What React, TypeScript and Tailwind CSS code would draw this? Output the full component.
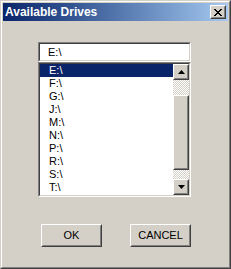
import React from 'react'

const drives = ['E:\\', 'F:\\', 'G:\\', 'J:\\', 'M:\\', 'N:\\', 'P:\\', 'R:\\', 'S:\\', 'T:\\']

function Arrow({ down }: { down?: boolean }) {
  return (
    <svg width="7" height="4" viewBox="0 0 7 4" className="block">
      {down ? <polygon points="0,0 7,0 3.5,4" fill="#000" /> : <polygon points="3.5,0 7,4 0,4" fill="#000" />}
    </svg>
  )
}

// raised 3d box, classic win2k style
function Raised({ className = '', children }: { className?: string; children?: React.ReactNode }) {
  return (
    <div className={`border border-t-white border-l-white border-r-[#404040] border-b-[#404040] bg-[#d4d0c8] ${className}`}>
      <div className="flex h-full w-full items-center justify-center border border-t-[#d4d0c8] border-l-[#d4d0c8] border-r-[#808080] border-b-[#808080]">
        {children}
      </div>
    </div>
  )
}

function Sunken({ className = '', children }: { className?: string; children?: React.ReactNode }) {
  return (
    <div className={`border border-t-[#808080] border-l-[#808080] border-r-white border-b-white ${className}`}>
      <div className="h-full w-full border border-t-[#404040] border-l-[#404040] border-r-[#d4d0c8] border-b-[#d4d0c8] bg-white">
        {children}
      </div>
    </div>
  )
}

export default function App() {
  return (
    <div className="h-[269px] w-[231px] border border-t-[#d4d0c8] border-l-[#d4d0c8] border-r-[#404040] border-b-[#404040] bg-[#d4d0c8] font-['Liberation_Sans',Arial,sans-serif]">
      <div className="flex h-full flex-col border border-t-white border-l-white border-r-[#808080] border-b-[#808080] p-px">
        {/* Title bar */}
        <div className="flex h-[18px] items-center justify-between bg-gradient-to-r from-[#0a246a] to-[#a6caf0] pl-[2px] pr-[2px]">
          <span className="text-[12px] leading-none font-bold text-white">Available Drives</span>
          <Raised className="h-[14px] w-[16px]">
            <svg width="8" height="7" viewBox="0 0 8 7" className="block">
              <path d="M0 0h2v1h-2zM6 0h2v1h-2zM1 1h2v1h-2zM5 1h2v1h-2zM2 2h4v1h-4zM3 3h2v1h-2zM2 4h4v1h-4zM1 5h2v1h-2zM5 5h2v1h-2zM0 6h2v1h-2zM6 6h2v1h-2z" fill="#000" />
            </svg>
          </Raised>
        </div>

        <div className="flex flex-col pl-[35px] pt-[21px]">
          <Sunken className="h-[20px] w-[153px]">
            <div className="pl-[8px] pt-[2px] text-[11px] leading-[13px] text-black">E:\</div>
          </Sunken>

          <Sunken className="h-[135px] w-[153px]">
            <div className="flex h-full">
              <div className="flex-1">
                {drives.map((d, i) => (
                  <div
                    key={d}
                    className={`h-[13px] pl-[9px] text-[11px] leading-[13px] ${i === 0 ? 'bg-[#0a246a] text-white' : 'text-black'}`}
                  >
                    {d}
                  </div>
                ))}
              </div>
              {/* Scrollbar */}
              <div className="flex w-[16px] flex-col bg-[repeating-conic-gradient(#fff_0%_25%,#d4d0c8_0%_50%)] bg-[length:2px_2px]">
                <Raised className="h-[16px] w-[16px]">
                  <Arrow />
                </Raised>
                <div className="h-[15px]" />
                <Raised className="h-[75px] w-[16px]" />
                <div className="flex-1" />
                <Raised className="h-[16px] w-[16px]">
                  <Arrow down />
                </Raised>
              </div>
            </div>
          </Sunken>

          <div className="mt-[27px] ml-[3px] flex gap-[28px]">
            <Raised className="h-[23px] w-[61px]">
              <span className="text-[11px] leading-none text-black">OK</span>
            </Raised>
            <Raised className="h-[23px] w-[61px]">
              <span className="text-[11px] leading-none text-black">CANCEL</span>
            </Raised>
          </div>
        </div>
      </div>
    </div>
  )
}
